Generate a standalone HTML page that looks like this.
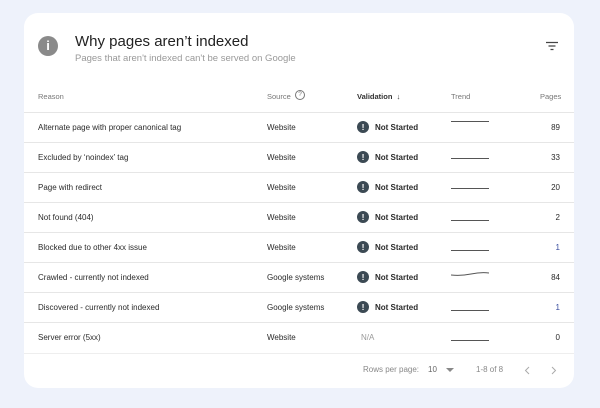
<!DOCTYPE html>
<html><head><style>
body{margin:0;width:600px;height:408px;background:#eef2fb;font-family:"Liberation Sans",sans-serif;position:relative;overflow:hidden}
.card{position:absolute;left:24px;top:13px;width:550px;height:375px;background:#fff;border-radius:14px}
.t{position:absolute;white-space:nowrap}
.row{position:absolute;left:0;width:550px;height:30px;border-top:1px solid #e6e6e6}
.c{position:absolute;top:0;line-height:30px;font-size:8px;color:#2a2a2a}
.ic{display:inline-block;width:12px;height:12px;border-radius:50%;background:#3c4a54;color:#fff;font-size:8.5px;font-weight:bold;text-align:center;line-height:12px;vertical-align:middle;margin-right:6px;position:relative;top:-1px}
.ln{position:absolute;left:427px;top:15px;width:38px;height:1px;background:#555}
</style></head><body>
<div class="card">
<div class="t" style="left:14px;top:23px;width:20px;height:20px;border-radius:50%;background:#8a8a8a;color:#fff;font-weight:bold;font-size:13px;text-align:center;line-height:20px">i</div>
<div class="t" style="left:51px;top:20px;font-size:15px;color:#222">Why pages aren’t indexed</div>
<div class="t" style="left:51px;top:40px;font-size:9.5px;color:#999">Pages that aren't indexed can't be served on Google</div>
<svg class="t" style="left:522px;top:28px" width="12" height="10"><path d="M0 1.5H12M2.5 5H9.5M4.5 8.5H7.5" stroke="#444" stroke-width="1.3"/></svg>
<div class="t" style="left:14px;top:79px;font-size:7.5px;color:#777">Reason</div>
<div class="t" style="left:243px;top:79px;font-size:7.5px;color:#777">Source</div>
<div class="t" style="left:271px;top:77px;width:8px;height:8px;border:1px solid #777;border-radius:50%;font-size:6.5px;text-align:center;line-height:8px;color:#777">?</div>
<div class="t" style="left:333px;top:79px;font-size:7.5px;color:#333;font-weight:bold">Validation &nbsp;↓</div>
<div class="t" style="left:427px;top:79px;font-size:7.5px;color:#777">Trend</div>
<div class="t" style="left:516px;top:79px;font-size:7.5px;color:#777">Pages</div>

<div class="row" style="top:99px"><div class="c" style="left:14px">Alternate page with proper canonical tag</div><div class="c" style="left:243px">Website</div><div class="c" style="left:333px"><span class="ic">!</span><b>Not Started</b></div><div class="ln" style="top:8px"></div><div class="c" style="right:14px">89</div></div>
<div class="row" style="top:129px"><div class="c" style="left:14px">Excluded by ‘noindex’ tag</div><div class="c" style="left:243px">Website</div><div class="c" style="left:333px"><span class="ic">!</span><b>Not Started</b></div><div class="ln"></div><div class="c" style="right:14px">33</div></div>
<div class="row" style="top:159px"><div class="c" style="left:14px">Page with redirect</div><div class="c" style="left:243px">Website</div><div class="c" style="left:333px"><span class="ic">!</span><b>Not Started</b></div><div class="ln"></div><div class="c" style="right:14px">20</div></div>
<div class="row" style="top:189px"><div class="c" style="left:14px">Not found (404)</div><div class="c" style="left:243px">Website</div><div class="c" style="left:333px"><span class="ic">!</span><b>Not Started</b></div><div class="ln" style="top:17px"></div><div class="c" style="right:14px">2</div></div>
<div class="row" style="top:219px"><div class="c" style="left:14px">Blocked due to other 4xx issue</div><div class="c" style="left:243px">Website</div><div class="c" style="left:333px"><span class="ic">!</span><b>Not Started</b></div><div class="ln" style="top:17px"></div><div class="c" style="right:14px;color:#3b4fa0">1</div></div>
<div class="row" style="top:249px"><div class="c" style="left:14px">Crawled - currently not indexed</div><div class="c" style="left:243px">Google systems</div><div class="c" style="left:333px"><span class="ic">!</span><b>Not Started</b></div><svg class="t" style="left:427px;top:8px" width="40" height="6"><path d="M0 4Q10 5 20 3T38 2" stroke="#555" fill="none" stroke-width="1"/></svg><div class="c" style="right:14px">84</div></div>
<div class="row" style="top:279px"><div class="c" style="left:14px">Discovered - currently not indexed</div><div class="c" style="left:243px">Google systems</div><div class="c" style="left:333px"><span class="ic">!</span><b>Not Started</b></div><div class="ln" style="top:17px"></div><div class="c" style="right:14px;color:#3b4fa0">1</div></div>
<div class="row" style="top:309px"><div class="c" style="left:14px">Server error (5xx)</div><div class="c" style="left:243px">Website</div><div class="c" style="left:337px;color:#999">N/A</div><div class="ln" style="top:17px"></div><div class="c" style="right:14px">0</div></div>
<div class="row" style="top:340px;height:34px;border-color:#eee">
<div class="c" style="left:339px;line-height:32px;color:#888">Rows per page:</div>
<div class="c" style="left:404px;line-height:32px;color:#666">10</div>
<div class="t" style="left:422px;top:14px;width:0;height:0;border-left:4px solid transparent;border-right:4px solid transparent;border-top:4px solid #888"></div>
<div class="c" style="left:452px;line-height:32px;color:#888">1-8 of 8</div>
<svg class="t" style="left:500px;top:12px" width="6" height="9"><path d="M5 1L1.5 4.5L5 8" stroke="#aaa" fill="none" stroke-width="1"/></svg>
<svg class="t" style="left:527px;top:12px" width="6" height="9"><path d="M1 1L4.5 4.5L1 8" stroke="#aaa" fill="none" stroke-width="1"/></svg>
</div>
</div>
</body></html>
